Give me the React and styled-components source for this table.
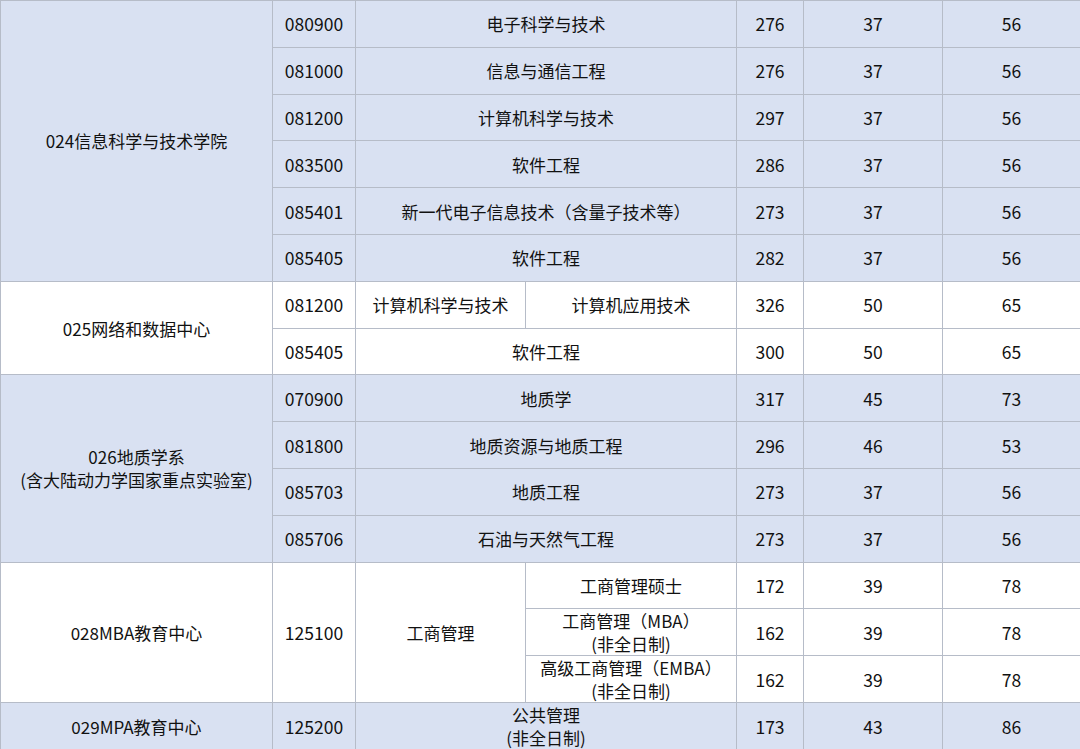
import React from 'react'
import styled, { createGlobalStyle } from 'styled-components'

const GlobalStyle = createGlobalStyle`
    html, body {
        margin: 0;
        padding: 0;
        background: #ffffff;
    }
    body {
        font-family: "Noto Sans CJK SC", "Noto Sans", sans-serif;
        color: #111111;
        overflow: hidden;
    }
`

const Table = styled.table`
    width: 1080px;
    height: 749px;
    border-collapse: collapse;
    table-layout: fixed;
    font-size: 17px;
    line-height: 23px;
`

const Row = styled.tr`
    height: 46.8px;
    background-color: ${props => (props.$blue ? '#d9e1f2' : '#ffffff')};
`

const Cell = styled.td`
    border: 1px solid #b6bcc8;
    text-align: center;
    vertical-align: middle;
    padding: 0 4px;
    white-space: nowrap;
`

const Num = styled(Cell)`
    font-size: 17.5px;
`

const rowsA = [
    ['080900', '电子科学与技术', '276', '37', '56'],
    ['081000', '信息与通信工程', '276', '37', '56'],
    ['081200', '计算机科学与技术', '297', '37', '56'],
    ['083500', '软件工程', '286', '37', '56'],
    ['085401', '新一代电子信息技术（含量子技术等）', '273', '37', '56'],
    ['085405', '软件工程', '282', '37', '56'],
]

const rowsC = [
    ['070900', '地质学', '317', '45', '73'],
    ['081800', '地质资源与地质工程', '296', '46', '53'],
    ['085703', '地质工程', '273', '37', '56'],
    ['085706', '石油与天然气工程', '273', '37', '56'],
]

const mba = [
    [['工商管理硕士'], '172', '39', '78'],
    [['工商管理（MBA）', '(非全日制)'], '162', '39', '78'],
    [['高级工商管理（EMBA）', '(非全日制)'], '162', '39', '78'],
]

const Lines = ({ lines }) => lines.map((l, i) => (
    <React.Fragment key={i}>{i > 0 && <br />}{l}</React.Fragment>
))

export default function App() {
    return (
        <>
            <GlobalStyle />
            <Table>
                <colgroup>
                    <col style={{ width: 272 }} />
                    <col style={{ width: 83 }} />
                    <col style={{ width: 170 }} />
                    <col style={{ width: 211 }} />
                    <col style={{ width: 67 }} />
                    <col style={{ width: 139 }} />
                    <col style={{ width: 138 }} />
                </colgroup>
                <tbody>
                    {rowsA.map((r, i) => (
                        <Row $blue key={'a' + i}>
                            {i === 0 && <Cell rowSpan={6}>024信息科学与技术学院</Cell>}
                            <Num>{r[0]}</Num>
                            <Cell colSpan={2}>{r[1]}</Cell>
                            <Num>{r[2]}</Num>
                            <Num>{r[3]}</Num>
                            <Num>{r[4]}</Num>
                        </Row>
                    ))}
                    <Row>
                        <Cell rowSpan={2}>025网络和数据中心</Cell>
                        <Num>081200</Num>
                        <Cell>计算机科学与技术</Cell>
                        <Cell>计算机应用技术</Cell>
                        <Num>326</Num>
                        <Num>50</Num>
                        <Num>65</Num>
                    </Row>
                    <Row>
                        <Num>085405</Num>
                        <Cell colSpan={2}>软件工程</Cell>
                        <Num>300</Num>
                        <Num>50</Num>
                        <Num>65</Num>
                    </Row>
                    {rowsC.map((r, i) => (
                        <Row $blue key={'c' + i}>
                            {i === 0 && (
                                <Cell rowSpan={4}>
                                    026地质学系<br />(含大陆动力学国家重点实验室)
                                </Cell>
                            )}
                            <Num>{r[0]}</Num>
                            <Cell colSpan={2}>{r[1]}</Cell>
                            <Num>{r[2]}</Num>
                            <Num>{r[3]}</Num>
                            <Num>{r[4]}</Num>
                        </Row>
                    ))}
                    {mba.map((r, i) => (
                        <Row key={'m' + i}>
                            {i === 0 && <Cell rowSpan={3}>028MBA教育中心</Cell>}
                            {i === 0 && <Num rowSpan={3}>125100</Num>}
                            {i === 0 && <Cell rowSpan={3}>工商管理</Cell>}
                            <Cell><Lines lines={r[0]} /></Cell>
                            <Num>{r[1]}</Num>
                            <Num>{r[2]}</Num>
                            <Num>{r[3]}</Num>
                        </Row>
                    ))}
                    <Row $blue>
                        <Cell>029MPA教育中心</Cell>
                        <Num>125200</Num>
                        <Cell colSpan={2}>公共管理<br />(非全日制)</Cell>
                        <Num>173</Num>
                        <Num>43</Num>
                        <Num>86</Num>
                    </Row>
                </tbody>
            </Table>
        </>
    )
}
